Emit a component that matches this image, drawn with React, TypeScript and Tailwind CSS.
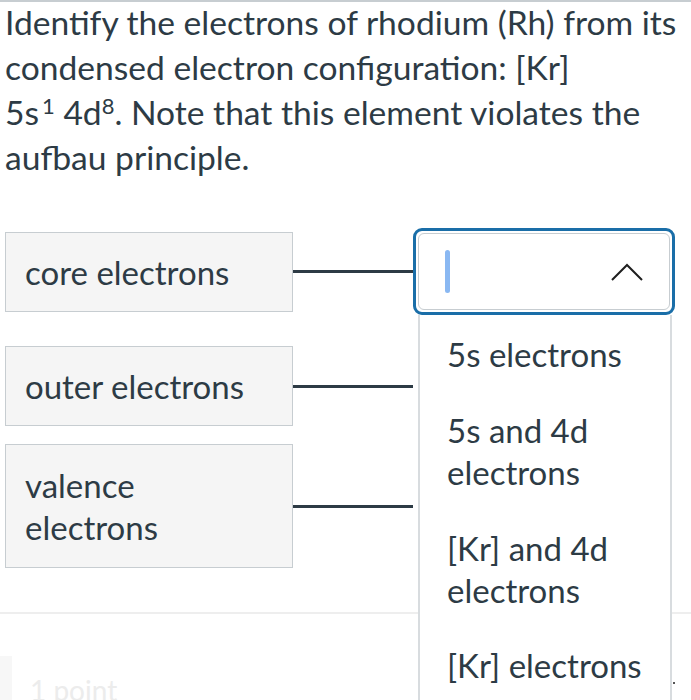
export default function App() {
  const rows = [
    { label: 'core electrons', h: 'h-[80px]', mt: 'mt-[0px]' },
    { label: 'outer electrons', h: 'h-[80px]', mt: 'mt-[31px]' },
    { label: 'valence electrons', h: 'h-[124px]', mt: 'mt-[18px]' },
  ];
  const options = [
    { text: '5s electrons', cls: 'pt-[18px]' },
    { text: '5s and 4d electrons', cls: 'pt-[34px]' },
    { text: '[Kr] and 4d electrons', cls: 'pt-[34px]' },
    { text: '[Kr] electrons', cls: 'pt-[33px]' },
  ];

  return (
    <div className="relative w-[691px] h-[700px] overflow-hidden bg-white text-[#2d3b45]" style={{ fontFamily: 'Lato, "Open Sans", sans-serif' }}>
      <div className="h-[2px] bg-[#c7cdd1]" />
      <p className="pl-[5px] pr-[4px] text-[33.6px] leading-[45px] mt-[-2px]">
        Identify the electrons of rhodium (Rh) from its condensed electron configuration: [Kr]
        <br />
        <span className="whitespace-nowrap">
          5s<sup className="text-[22px] relative top-[-11px] leading-none ml-[3px]">1</sup> 4d<sup className="text-[22px] relative top-[-11px] leading-none">8</sup>.
        </span>{' '}
        Note that this element violates the aufbau principle.
      </p>

      <div className="mt-[48px] pl-[5px]">
        {rows.map((r, i) => (
          <div key={i} className={`flex items-center ${r.mt}`}>
            <div className={`w-[288px] ${r.h} flex items-center border border-[#c7cdd1] bg-[#f5f5f5] pl-[19px] text-[33px] leading-[42px]`}>
              <span className={i === 2 ? 'w-[160px]' : ''}>{r.label}</span>
            </div>
            <div className="w-[120px] h-[3px] bg-[#2d3b45]" />
            {i === 0 && (
              <div className="w-[262px] h-[87px] rounded-[9px] border-[3px] border-[#1a6ea8] p-[2px]">
                <div className="h-full rounded-[6px] border border-[#c7cdd1] flex items-center justify-between pl-[26px] pr-[26px]">
                  <div className="w-[5px] h-[43px] rounded-full bg-[#8ab8f2]" />
                  <svg width="32" height="18" viewBox="0 0 32 18" fill="none">
                    <path d="M1 17 L16 2 L31 17" stroke="#1f1f1f" strokeWidth="2" />
                  </svg>
                </div>
              </div>
            )}
          </div>
        ))}
      </div>

      <div className="mt-[44px] h-[2px] bg-[#eeeeee]" />

      <div className="flex items-start mt-[42px]">
        <div className="w-[12px] h-[50px] bg-[#f7f7f7]" />
        <div className="ml-[18px] mt-[14px] text-[28px] leading-[40px] text-[#ececec]">1 point</div>
      </div>
      <div className="absolute left-[673px] top-[682px] w-[2px] h-[2px] bg-[#555]" />

      <div className="absolute left-[418px] top-[315px] w-[254px] h-[400px] bg-white border-x-2 border-[#d8dcdf]">
        {options.map((o, i) => (
          <div key={i} className={`pl-[27px] pr-[16px] text-[33px] leading-[42px] ${o.cls}`}>
            {o.text}
          </div>
        ))}
      </div>
    </div>
  );
}
